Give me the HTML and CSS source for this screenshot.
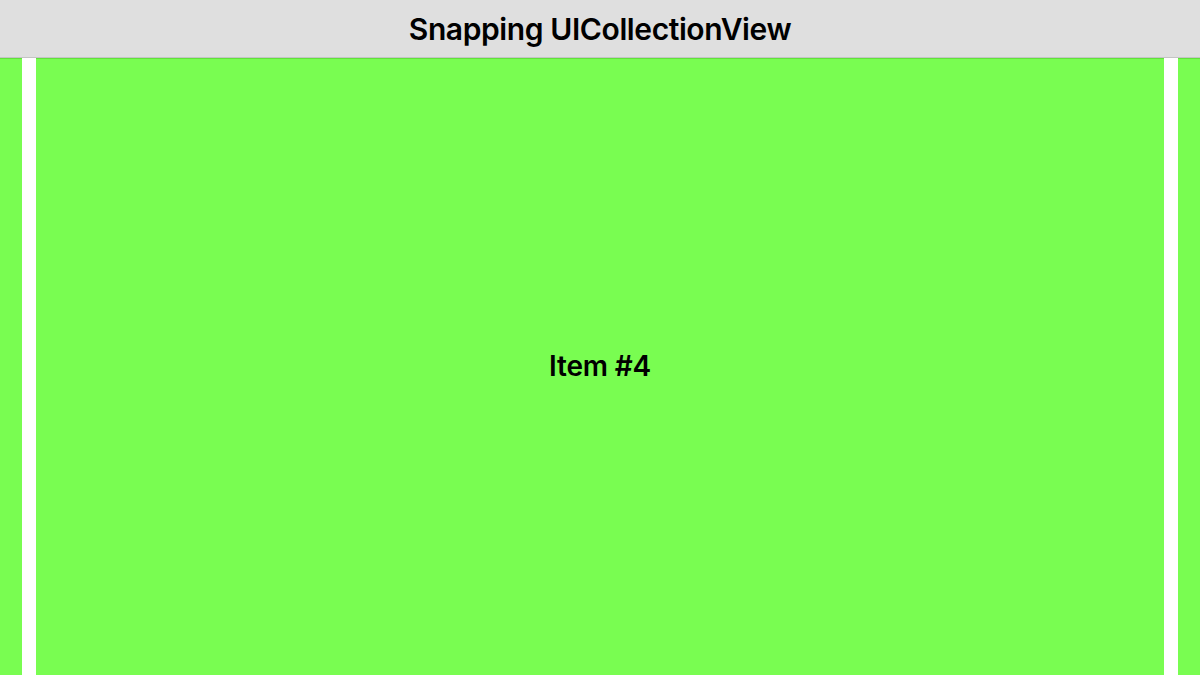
FILE: index.html
```html
<!DOCTYPE html>
<html>
<head>
<meta charset="utf-8">
<link rel="stylesheet" href="styles.css">
</head>
<body>
<header class="nav-bar">
  <h1 class="nav-title">Snapping UICollectionView</h1>
</header>
<main class="collection">
  <div class="cell cell-edge"></div>
  <div class="cell cell-main"><span class="cell-label">Item #4</span></div>
  <div class="cell cell-edge"></div>
</main>
</body>
</html>
```
FILE: styles.css
```css
html, body {
  margin: 0;
  padding: 0;
  width: 1200px;
  height: 675px;
  overflow: hidden;
  background: #ffffff;
  font-family: Inter, "Noto Sans", sans-serif;
}

.nav-bar {
  height: 57px;
  background: #dfdfdf;
  border-bottom: 1px solid #c4c4c4;
  display: flex;
  align-items: center;
  justify-content: center;
}

.nav-title {
  margin: 0;
  font-size: 30px;
  font-weight: 600;
  color: #000;
  letter-spacing: -0.4px;
}

/* paging strip: the current cell is centred, neighbours peek in at the sides */
.collection {
  display: flex;
  justify-content: center;
  gap: 14px;
  height: 617px;
  width: 1200px;
  overflow: hidden;
}

.cell {
  flex: 0 0 1128px;
  background: #79fd51;
  border-top: 1px solid #62e03c;
  box-sizing: border-box;
  display: flex;
  align-items: center;
  justify-content: center;
}

.cell-label {
  font-size: 28px;
  font-weight: 600;
  color: #000;
  letter-spacing: -0.2px;
  padding-bottom: 2px;
}
```
